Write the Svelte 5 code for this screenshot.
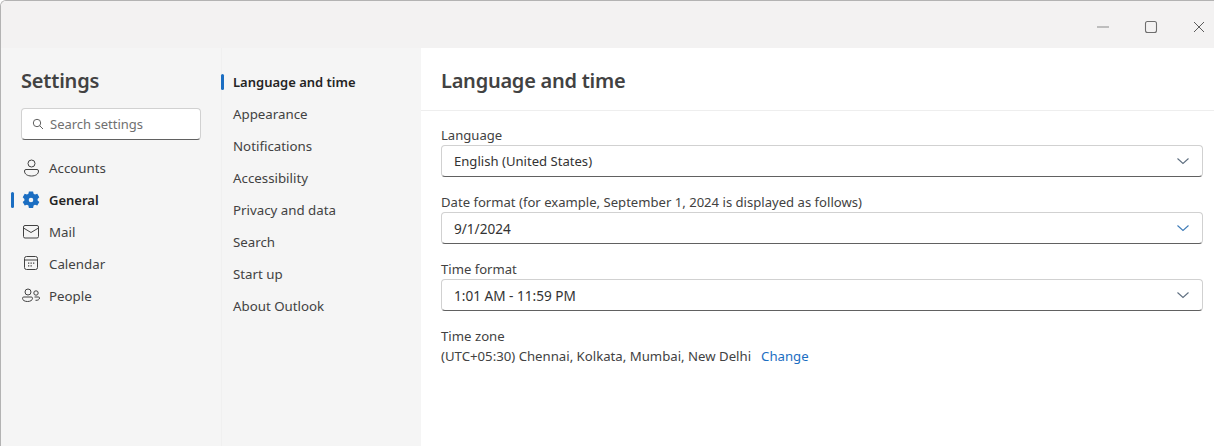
<script>
  const groups = [
    { label: 'Accounts', icon: 'user' },
    { label: 'General', icon: 'gear', active: true },
    { label: 'Mail', icon: 'mail' },
    { label: 'Calendar', icon: 'cal' },
    { label: 'People', icon: 'people' }
  ];
  const sections = ['Language and time','Appearance','Notifications','Accessibility','Privacy and data','Search','Start up','About Outlook'];
  const fields = [
    { label: 'Language', value: 'English (United States)', kind: 'words' },
    { label: 'Date format (for example, September 1, 2024 is displayed as follows)', value: '9/1/2024', kind: 'nums', focus: true },
    { label: 'Time format', value: '1:01 AM - 11:59 PM', kind: 'nums' }
  ];
</script>

<div class="window">
  <header class="titlebar">
    <button class="winbtn" aria-label="Minimize"><svg width="14" height="14" viewBox="0 0 14 14"><path d="M1 7h12" stroke="#8a8a8a" stroke-width="1.2"/></svg></button>
    <button class="winbtn" aria-label="Maximize"><svg width="14" height="14" viewBox="0 0 14 14"><rect x="1.5" y="1.5" width="11" height="11" rx="2" fill="none" stroke="#6e6e6e" stroke-width="1.1"/></svg></button>
    <button class="winbtn" aria-label="Close"><svg width="14" height="14" viewBox="0 0 14 14"><path d="M2 2l10 10M12 2L2 12" stroke="#5c5c5c" stroke-width="1"/></svg></button>
  </header>
  <div class="body">
    <aside class="side">
      <h1>Settings</h1>
      <div class="search">
        <svg width="14" height="14" viewBox="0 0 14 14"><circle cx="6" cy="6" r="3.7" fill="none" stroke="#616161"/><path d="M8.7 8.7L12 12" stroke="#616161"/></svg>
        <span>Search settings</span>
      </div>
      <nav class="groups">
        {#each groups as g}
          <div class="group" class:active={g.active}>
            <span class="ic">
              {#if g.icon === 'user'}
                <svg width="18" height="18" viewBox="0 0 18 18" fill="none" stroke="#424242"><circle cx="9.5" cy="4.500" r="3.500"/><path d="M2.500 12a1.500 1.500 0 0 1 1.500-1.500h11a1.500 1.500 0 0 1 1.500 1.500c0 3.200-3 5-7 5s-7-1.800-7-5z"/></svg>
              {:else if g.icon === 'gear'}
                <svg width="18" height="18" viewBox="0 0 18 18"><path fill="#1b6ec2" fill-rule="evenodd" d="M6.900 .5h4.200l.5 2.300 1.400.8 2.300-.8 2 3.500-1.700 1.600v1.600l1.700 1.600-2 3.500-2.300-.8-1.400.8-.5 2.300H6.900l-.5-2.300-1.400-.8-2.300.8-2-3.500 1.700-1.600V7.900L.7 6.300l2-3.500 2.300.8 1.400-.8zM9 6.700a2.300 2.300 0 1 0 0 4.600 2.300 2.300 0 0 0 0-4.600z"/></svg>
              {:else if g.icon === 'mail'}
                <svg width="18" height="18" viewBox="0 0 18 18" fill="none" stroke="#424242"><rect x="1.500" y="2.500" width="15" height="12.500" rx="1.500"/><path d="M1.500 5L9 9.500 16.500 5"/></svg>
              {:else if g.icon === 'cal'}
                <svg width="18" height="18" viewBox="0 0 18 18" fill="none"><rect x="2.500" y="1.500" width="13" height="13" rx="2" stroke="#424242"/><path d="M2.500 5h13" stroke="#424242"/><path d="M6 7.500h1.300v1.300H6zM8.500 7.500h1.300v1.300H8.500zM11 7.500h1.300v1.300H11zM6 10.200h1.300v1.300H6zM8.500 10.200h1.300v1.300H8.500z" fill="#424242"/></svg>
              {:else}
                <svg width="18" height="18" viewBox="0 0 18 18" fill="none" stroke="#424242"><circle cx="6" cy="5" r="3"/><circle cx="14" cy="6" r="2.200"/><path d="M.5 11.300A1.300 1.300 0 0 1 1.800 10h7.400a1.300 1.300 0 0 1 1.300 1.300c0 2-2.200 3.200-5 3.200s-5-1.200-5-3.200z"/><path d="M12.500 10h4a1 1 0 0 1 1 1c0 1.500-1.500 2.500-4 2.300"/></svg>
              {/if}
            </span>
            <span>{g.label}</span>
          </div>
        {/each}
      </nav>
    </aside>
    <nav class="sections">
      {#each sections as s, i}
        <div class="section" class:active={i === 0}>{s}</div>
      {/each}
    </nav>
    <main class="content">
      <h2>Language and time</h2>
      <div class="form">
        {#each fields as f}
          <div class="field">
            <div class="label">{f.label}</div>
            <div class="select">
              <span class={f.kind}>{f.value}</span>
              <svg width="14" height="14" viewBox="0 0 14 14" fill="none"><path d="M1.500 4.500L7 9.500l5.500-5" stroke={f.focus ? '#3f7cb8' : '#5f6f80'} stroke-width="1.100"/></svg>
            </div>
          </div>
        {/each}
        <div class="tz">
          <div>Time zone</div>
          <div class="tzrow"><span>(UTC+05:30) Chennai, Kolkata, Mumbai, New Delhi</span><a href="#change">Change</a></div>
        </div>
      </div>
    </main>
  </div>
</div>

<style>
  :global(body) { margin: 0; background: #fff; }
  .window {
    width: 1214px; height: 446px; box-sizing: border-box; overflow: hidden;
    border-top: 1px solid #b3b3b3; border-left: 1px solid #b3b3b3;
    border-top-left-radius: 6px;
    font-family: "Noto Sans", "Open Sans", sans-serif; font-size: 14px; color: #424242;
    display: flex; flex-direction: column;
  }
  .titlebar { height: 47px; background: #f3f2f2; display: flex; justify-content: flex-end; gap: 18px; flex: none; }
  .winbtn { width: 30px; height: 52px; padding: 0; border: 0; background: none; display: flex; align-items: center; justify-content: center; }
  .body { flex: 1; display: flex; min-height: 0; }
  .side { width: 220px; flex: none; background: #f5f5f5; box-sizing: border-box; padding: 18px 20px 0 0; }
  h1 { margin: 0 0 12px 20px; font-size: 20px; line-height: 30px; font-weight: 600; color: #424242; letter-spacing: -0.2px; }
  .search {
    margin-left: 20px; height: 32px; box-sizing: border-box; background: #fff;
    border: 1px solid #d1d1d1; border-bottom-color: #616161; border-radius: 4px;
    display: flex; align-items: center; gap: 5px; padding-left: 9px; color: #707070; font-size: 13px;
  }
  .groups { margin-top: 12px; }
  .group { height: 32px; display: flex; align-items: center; gap: 9px; padding-left: 21px; position: relative; font-size: 13.300px; }
  .ic { width: 18px; height: 18px; display: flex; }
  .group.active, .section.active { font-weight: 600; color: #242424; }
  .group.active, .section.active { font-size: 13px; }
  .group.active::before, .section.active::before {
    content: ""; position: absolute; left: 10px; top: 8px; width: 3px; height: 16px; background: #1b6ec2; border-radius: 2px;
  }
  .sections { width: 200px; flex: none; background: #f5f5f5; padding-top: 18px; border-left: 1px solid #f0f0f0; box-sizing: border-box; }
  .section { height: 32px; display: flex; align-items: center; padding-left: 11px; position: relative; font-size: 13.300px; }
  .section.active::before { left: -1px; }
  .content { flex: 1; min-width: 0; background: #fff; }
  h2 { margin: 0; height: 63px; box-sizing: border-box; padding: 18px 0 0 20px; font-size: 20px; line-height: 30px; font-weight: 600; color: #424242; border-bottom: 1px solid #eeeeee; letter-spacing: -0.25px; }
  .form { padding: 15px 11px 0 20px; }
  .field { margin-bottom: 16px; }
  .label { line-height: 19px; font-size: 13.100px; }
  .select {
    height: 32px; box-sizing: border-box; border: 1px solid #d1d1d1; border-bottom-color: #616161; border-radius: 4px;
    display: flex; align-items: center; justify-content: space-between; padding: 0 12px; color: #333;
  }
  .words { font-size: 13.100px; }
  .nums { font-size: 13.600px; }
  .tz { font-size: 13.200px; line-height: 18px; }
  .tzrow { display: flex; gap: 10px; margin-top: 2px; }
  a { color: #1b6ec2; text-decoration: none; }
</style>
